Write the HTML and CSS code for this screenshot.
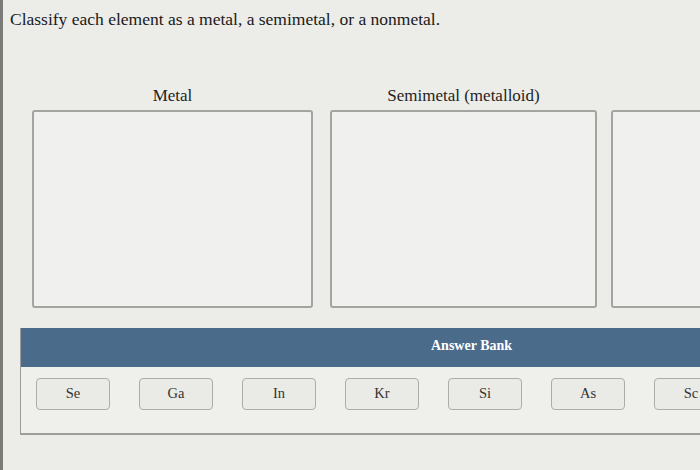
FILE: index.html
```html
<!DOCTYPE html>
<html>
<head>
<meta charset="utf-8">
<link rel="stylesheet" href="styles.css">
</head>
<body>
<div class="page">
  <p class="title">Classify each element as a metal, a semimetal, or a nonmetal.</p>
  <div class="columns">
    <div class="col col1">
      <div class="label">Metal</div>
      <div class="drop"></div>
    </div>
    <div class="col col2">
      <div class="label">Semimetal (metalloid)</div>
      <div class="drop"></div>
    </div>
    <div class="col col3">
      <div class="label">&nbsp;</div>
      <div class="drop"></div>
    </div>
  </div>
  <div class="bank">
    <div class="bank-head">Answer Bank</div>
    <div class="bank-body">
      <div class="tile">Se</div>
      <div class="tile">Ga</div>
      <div class="tile">In</div>
      <div class="tile">Kr</div>
      <div class="tile">Si</div>
      <div class="tile">As</div>
      <div class="tile">Sc</div>
    </div>
  </div>
</div>
</body>
</html>
```
FILE: styles.css
```css
html, body {
  margin: 0;
  padding: 0;
  width: 700px;
  height: 470px;
  overflow: hidden;
  background: #ecece9;
}
.page {
  box-sizing: border-box;
  width: 700px;
  height: 470px;
  border-left: 3px solid #7a7a78;
  font-family: "Liberation Serif", "Times New Roman", serif;
  color: #222;
  overflow: hidden;
}
.title {
  margin: 0;
  padding: 9px 0 0 7px;
  font-size: 17.5px;
  line-height: 20px;
  color: #1a1a1a;
}
.columns {
  display: flex;
  margin-top: 56px;
  padding-left: 29px;
  width: 800px;
}
.col {
  display: flex;
  flex-direction: column;
  flex: none;
}
.col1 { width: 281px; margin-right: 17px; }
.col2 { width: 267px; margin-right: 14px; }
.col3 { width: 120px; }
.label {
  text-align: center;
  font-size: 17px;
  line-height: 21px;
  height: 25px;
  color: #1e1e1e;
}
.drop {
  height: 194px;
  border: 2px solid #a3a3a1;
  border-radius: 3px;
  background: #f0f0ee;
}
.bank {
  margin-top: 20px;
  margin-left: 17px;
  width: 720px;
  border-left: 1px solid #9c9c9a;
  border-bottom: 2px solid #9c9c9a;
}
.bank-head {
  height: 39px;
  background: #4b6b8b;
  color: #fff;
  font-size: 14px;
  font-weight: bold;
  display: flex;
  align-items: center;
  padding-left: 410px;
  padding-bottom: 4px;
  box-sizing: border-box;
}
.bank-body {
  display: flex;
  gap: 29px;
  padding: 11px 0 23px 15px;
  background: #efefec;
}
.tile {
  flex: none;
  box-sizing: border-box;
  width: 74px;
  height: 32px;
  border: 1.5px solid #acacaa;
  border-radius: 4px;
  background: #eaeae7;
  font-size: 14.5px;
  line-height: 29px;
  text-align: center;
  color: #333;
}
```
